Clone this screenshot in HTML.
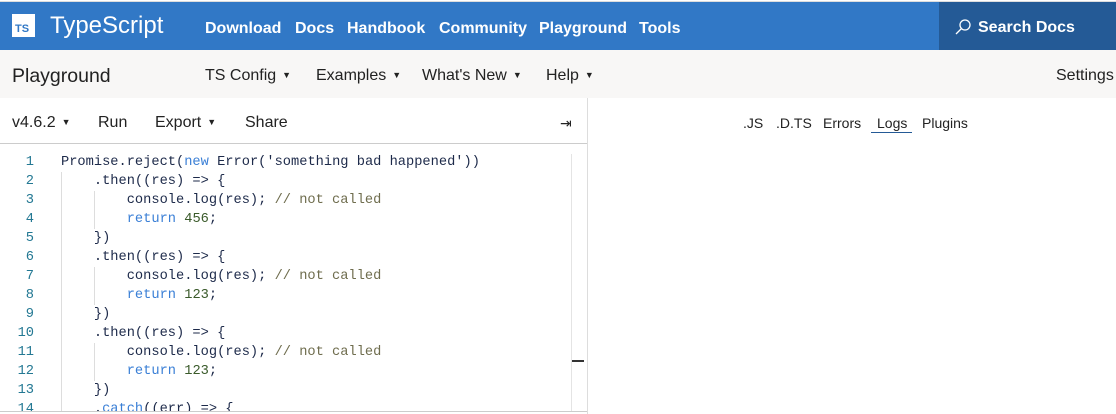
<!DOCTYPE html>
<html><head><meta charset="utf-8"><style>
*{margin:0;padding:0;box-sizing:border-box}
body{width:1116px;height:414px;overflow:hidden;background:#fff;font-family:"Segoe UI","Liberation Sans",sans-serif;position:relative}
.top{position:absolute;left:0;top:1px;width:1116px;height:49px;background:#3178c6;border-top:1px solid #ddd}
.top .logo{position:absolute;left:12px;top:12px;width:23px;height:23px;background:#fff;color:#3178c6;font-weight:bold;font-size:11px;line-height:11px;padding-top:10px;padding-left:3px}
.top .brand{position:absolute;left:50px;top:10px;color:#fff;font-size:24px}
.nav{position:absolute;top:18px;color:#fff;font-size:16px;font-weight:bold}
.search{position:absolute;left:939px;top:0;width:177px;height:48px;background:#245a96;color:#fff;font-size:16px;font-weight:bold}
.bar2{position:absolute;left:0;top:50px;width:1116px;height:48px;background:#f8f7f6}
.t2{position:absolute;font-size:16px;color:#222;top:67px}
.car{font-size:9px;vertical-align:2px;margin-left:6px}
.t3{position:absolute;font-size:16px;color:#222;top:114px}
.t4{position:absolute;font-size:14px;color:#222;top:115px}
.code{position:absolute;left:0;top:153px;font-family:"Liberation Mono",monospace;font-size:13.7px;line-height:19px;color:#1d2a4a}
.ln{position:absolute;width:34px;text-align:right;color:#237893}
.cl{position:absolute;left:61px;white-space:pre}
.k{color:#3a7fd6}.c{color:#6f6d4e}.n{color:#3a5a2a}
.guide{position:absolute;width:1px;background:#ddd}
</style></head><body>
<div class="top">
<div class="logo">TS</div>
<div class="brand">TypeScript</div>
<div class="nav" style="left:205px">Download</div>
<div class="nav" style="left:295px">Docs</div>
<div class="nav" style="left:347px">Handbook</div>
<div class="nav" style="left:439px">Community</div>
<div class="nav" style="left:539px">Playground</div>
<div class="nav" style="left:639px">Tools</div>
<div class="search"><svg style="position:absolute;left:15px;top:16px" width="18" height="18" viewBox="0 0 18 18"><circle cx="11" cy="7" r="5" fill="none" stroke="#fff" stroke-width="1.3"/><path d="M7.5 10.5L2 16" stroke="#fff" stroke-width="1.3"/></svg><span style="position:absolute;left:39px;top:17px">Search Docs</span></div>
</div>
<div class="bar2"></div>
<div class="t2" style="left:12px;font-size:19.5px;top:65px">Playground</div>
<div class="t2" style="left:205px">TS Config<span class="car">▼</span></div>
<div class="t2" style="left:316px">Examples<span class="car">▼</span></div>
<div class="t2" style="left:422px">What's New<span class="car">▼</span></div>
<div class="t2" style="left:546px">Help<span class="car">▼</span></div>
<div class="t2" style="left:1056px">Settings</div>
<div class="t3" style="left:12px">v4.6.2<span class="car">▼</span></div>
<div class="t3" style="left:98px">Run</div>
<div class="t3" style="left:155px">Export<span class="car">▼</span></div>
<div class="t3" style="left:245px">Share</div>
<div class="t3" style="left:560px;font-size:14px;top:115px">⇥</div>
<div style="position:absolute;left:0;top:143px;width:587px;height:1px;background:#ccc"></div>
<div style="position:absolute;left:587px;top:98px;width:1px;height:316px;background:#ddd"></div>
<div class="t4" style="left:743px">.JS</div>
<div class="t4" style="left:776px">.D.TS</div>
<div class="t4" style="left:823px">Errors</div>
<div class="t4" style="left:877px">Logs</div>
<div style="position:absolute;left:871px;top:132px;width:41px;height:1px;background:#245a96"></div>
<div class="t4" style="left:922px">Plugins</div>
<div style="position:absolute;left:571px;top:154px;width:1px;height:257px;background:#e4e4e4"></div>
<div style="position:absolute;left:572px;top:360px;width:12px;height:2px;background:#333"></div>
<div class="guide" style="left:61px;top:172px;height:239px"></div>
<div class="guide" style="left:94px;top:191px;height:38px"></div>
<div class="guide" style="left:94px;top:267px;height:38px"></div>
<div class="guide" style="left:94px;top:343px;height:38px"></div>
<div style="position:absolute;left:0;top:154px;width:587px;height:257px;overflow:hidden">
<div class="code" style="top:-1px">
<div class="ln" style="top:0">1</div><div class="ln" style="top:19px">2</div><div class="ln" style="top:38px">3</div><div class="ln" style="top:57px">4</div><div class="ln" style="top:76px">5</div><div class="ln" style="top:95px">6</div><div class="ln" style="top:114px">7</div><div class="ln" style="top:133px">8</div><div class="ln" style="top:152px">9</div><div class="ln" style="top:171px">10</div><div class="ln" style="top:190px">11</div><div class="ln" style="top:209px">12</div><div class="ln" style="top:228px">13</div><div class="ln" style="top:247px">14</div>
<div class="cl" style="top:0">Promise.reject(<span class="k">new</span> Error('something bad happened'))</div>
<div class="cl" style="top:19px">    .then((res) => {</div>
<div class="cl" style="top:38px">        console.log(res); <span class="c">// not called</span></div>
<div class="cl" style="top:57px">        <span class="k">return</span> <span class="n">456</span>;</div>
<div class="cl" style="top:76px">    })</div>
<div class="cl" style="top:95px">    .then((res) => {</div>
<div class="cl" style="top:114px">        console.log(res); <span class="c">// not called</span></div>
<div class="cl" style="top:133px">        <span class="k">return</span> <span class="n">123</span>;</div>
<div class="cl" style="top:152px">    })</div>
<div class="cl" style="top:171px">    .then((res) => {</div>
<div class="cl" style="top:190px">        console.log(res); <span class="c">// not called</span></div>
<div class="cl" style="top:209px">        <span class="k">return</span> <span class="n">123</span>;</div>
<div class="cl" style="top:228px">    })</div>
<div class="cl" style="top:247px">    .<span class="k">catch</span>((err) => {</div>
</div>
</div>
<div style="position:absolute;left:0;top:411px;width:587px;height:1px;background:#ccc"></div>
</body></html>
